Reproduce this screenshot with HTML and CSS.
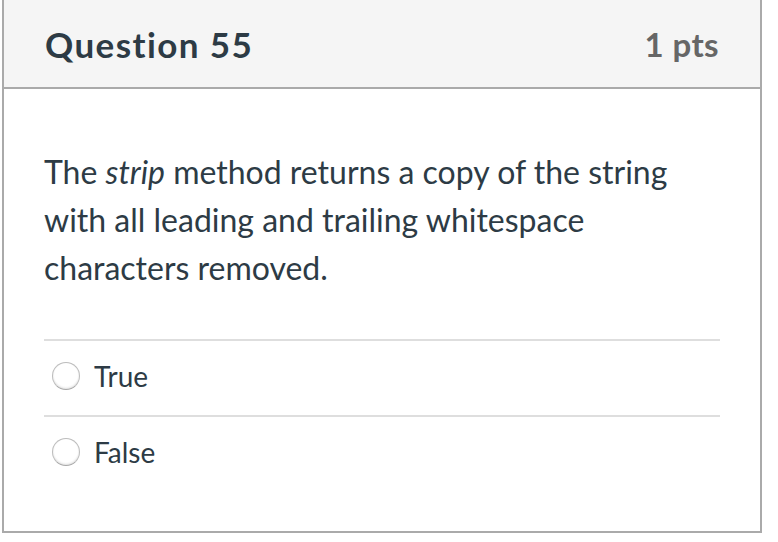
FILE: index.html
```html
<!DOCTYPE html>
<html>
<head>
<meta charset="utf-8">
<link rel="stylesheet" href="styles.css">
</head>
<body>
<div class="card">
  <div class="header">
    <h2 class="title">Question 55</h2>
    <div class="pts">1 pts</div>
  </div>
  <div class="content">
    <p class="question">The <em>strip</em> method returns a copy of the string with all leading and trailing whitespace characters removed.</p>
    <div class="answers">
      <label class="answer"><span class="radio"></span><span class="label">True</span></label>
      <label class="answer"><span class="radio"></span><span class="label">False</span></label>
    </div>
  </div>
</div>
</body>
</html>
```
FILE: styles.css
```css
html, body {
  margin: 0;
  padding: 0;
  background: #ffffff;
}
body {
  font-family: Lato, "Open Sans", sans-serif;
  color: #2d3b45;
}
.card {
  margin-left: 2px;
  width: 756px;
  border: 2px solid #aaaaaa;
  border-top: none;
  height: 531px;
}
.header {
  height: 87px;
  background: #f5f5f5;
  border-bottom: 2px solid #aaaaaa;
  display: flex;
  align-items: center;
  justify-content: space-between;
  padding: 0 41px 0 41px;
}
.title {
  margin: 0;
  font-size: 35px;
  letter-spacing: 1.4px;
  font-weight: 700;
  color: #2d3b45;
}
.pts {
  font-size: 33px;
  letter-spacing: 0.4px;
  font-weight: 700;
  color: #666666;
}
.content {
  padding: 59px 40px 0 40px;
}
.question {
  margin: 0;
  font-size: 32px;
  line-height: 48px;
}
.answers {
  margin-top: 47px;
}
.answer {
  display: flex;
  align-items: center;
  gap: 14px;
  border-top: 2px solid #dedede;
  height: 69px;
  padding-bottom: 5px;
  padding-left: 8px;
}
.radio {
  box-sizing: border-box;
  width: 28px;
  height: 28px;
  border-radius: 50%;
  border: 1px solid #bdbdbd;
  border-bottom-color: #a8a8a8;
  background: radial-gradient(circle at 50% 40%, #ffffff 60%, #f2f2f2 100%);
  box-shadow: inset 0 -1px 2px rgba(0,0,0,0.10);
}
.label {
  font-size: 28px;
}
```
